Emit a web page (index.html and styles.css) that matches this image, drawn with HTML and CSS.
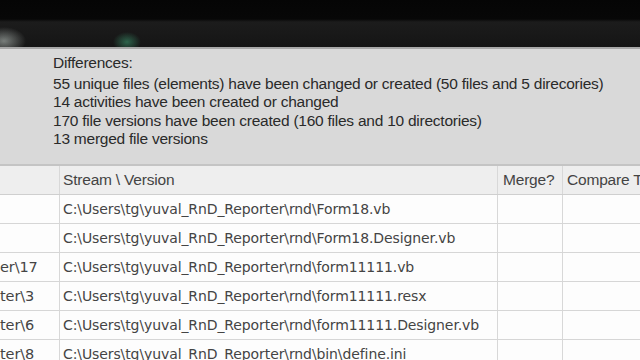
FILE: index.html
```html
<!DOCTYPE html>
<html lang="en">
<head>
    <meta charset="UTF-8">
    <title>Differences</title>
    <link rel="stylesheet" href="styles.css">
</head>
<body>
    <div class="topbar"></div>
    <div class="summary">
        <div class="summary-title">Differences:</div>
        <div>55 unique files (elements) have been changed or created (50 files and 5 direcories)</div>
        <div>14 activities have been created or changed</div>
        <div>170 file versions have been created (160 files and 10 directories)</div>
        <div>13 merged file versions</div>
    </div>
    <div class="grid">
        <div class="row head">
            <div class="cell c1"></div>
            <div class="cell c2">Stream \ Version</div>
            <div class="cell c3">Merge?</div>
            <div class="cell c4">Compare T</div>
        </div>
        <div class="row">
            <div class="cell c1"></div>
            <div class="cell c2">C:\Users\tg\yuval_RnD_Reporter\rnd\Form18.vb</div>
            <div class="cell c3"></div>
            <div class="cell c4"></div>
        </div>
        <div class="row">
            <div class="cell c1"></div>
            <div class="cell c2">C:\Users\tg\yuval_RnD_Reporter\rnd\Form18.Designer.vb</div>
            <div class="cell c3"></div>
            <div class="cell c4"></div>
        </div>
        <div class="row">
            <div class="cell c1">er\17</div>
            <div class="cell c2">C:\Users\tg\yuval_RnD_Reporter\rnd\form11111.vb</div>
            <div class="cell c3"></div>
            <div class="cell c4"></div>
        </div>
        <div class="row">
            <div class="cell c1">ter\3</div>
            <div class="cell c2">C:\Users\tg\yuval_RnD_Reporter\rnd\form11111.resx</div>
            <div class="cell c3"></div>
            <div class="cell c4"></div>
        </div>
        <div class="row">
            <div class="cell c1">ter\6</div>
            <div class="cell c2">C:\Users\tg\yuval_RnD_Reporter\rnd\form11111.Designer.vb</div>
            <div class="cell c3"></div>
            <div class="cell c4"></div>
        </div>
        <div class="row">
            <div class="cell c1">ter\8</div>
            <div class="cell c2">C:\Users\tg\yuval_RnD_Reporter\rnd\bin\define.ini</div>
            <div class="cell c3"></div>
            <div class="cell c4"></div>
        </div>
    </div>
</body>
</html>
```

FILE: styles.css
```css
html, body {
    margin: 0;
    width: 640px;
    height: 360px;
    overflow: hidden;
    background: #f4f4f4;
}
.topbar {
    height: 47px;
    background:
        radial-gradient(ellipse 22px 14px at 4px 41px, rgba(200, 210, 205, 0.55), transparent),
        radial-gradient(ellipse 14px 10px at 127px 42px, rgba(60, 150, 110, 0.6), transparent),
        linear-gradient(#050505 0, #070707 19px, #1c1c1c 22px, #151515 47px);
}
.summary {
    border-top: 2px solid #a8a8a8;
    border-bottom: 2px solid #c4c4c4;
    background: #d9d9d9;
    padding: 5px 0 13px 53px;
    height: 97px;
    font-family: "Liberation Sans", Arial, sans-serif;
    font-size: 15.5px;
    line-height: 18.6px;
    color: #2a2a2a;
    letter-spacing: -0.24px;
}
.summary-title {
    margin-bottom: 2px;
}
.grid {
    font-family: "DejaVu Sans", Verdana, sans-serif;
    font-size: 14px;
    letter-spacing: -0.1px;
    color: #444444;
}
.row {
    display: flex;
    height: 28px;
    border-bottom: 1px solid #d6d6d6;
    background: #fdfdfd;
}
.row.head {
    background: #eeeeee;
    font-family: "Liberation Sans", Arial, sans-serif;
    font-size: 15.5px;
    letter-spacing: -0.2px;
    border-bottom-color: #cfcfcf;
}
.cell {
    display: flex;
    align-items: center;
    white-space: nowrap;
    overflow: hidden;
    border-right: 1px solid #d8d8d8;
    box-sizing: border-box;
}
.c1 {
    width: 60px;
    padding-left: 0;
    font-size: 14.5px;
}
.c2 {
    width: 438px;
    padding-left: 3px;
}
.c3 {
    width: 65px;
    padding-left: 5px;
}
.c4 {
    flex: 1;
    padding-left: 4px;
    border-right: none;
}
```
